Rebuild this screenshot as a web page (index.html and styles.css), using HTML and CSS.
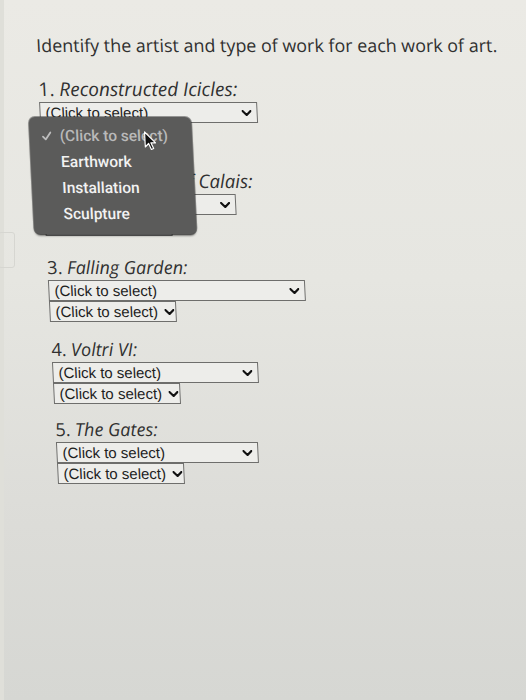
FILE: index.html
```html
<!DOCTYPE html>
<html>
<head>
<meta charset="utf-8">
<link rel="stylesheet" href="styles.css">
</head>
<body>
<div class="screen">
  <div class="edge-box"></div>
  <div class="page">
    <p class="title">Identify the artist and type of work for each work of art.</p>
    <ol class="items">
      <li class="item gap-1">
        <div class="label label-lg">1. <em>Reconstructed Icicles:</em></div>
        <div class="sel-wrap">
          <div class="sel w-218"><span>(Click to select)</span><svg class="chev" viewBox="0 0 10 6"><path d="M1 1 L5 5 L9 1"/></svg></div>
          <div class="menu">
            <div class="opt opt-current"><svg class="check" viewBox="0 0 10 10"><path d="M1.2 5.6 L3.8 8.4 L8.8 1.4"/></svg>(Click to select)</div>
            <div class="opt">Earthwork</div>
            <div class="opt">Installation</div>
            <div class="opt">Sculpture</div>
            <svg class="cursor" viewBox="0 0 12 20"><path d="M1 1 L1 16 L4.5 12.5 L7 18.5 L9.3 17.5 L6.8 11.8 L11.5 11.8 Z"/></svg>
          </div>
        </div>
        <div class="sel w-127"><span>(Click to select)</span><svg class="chev" viewBox="0 0 10 6"><path d="M1 1 L5 5 L9 1"/></svg></div>
      </li>
      <li class="item gap-2">
        <div class="label label-md">2. <em>The Burghers of Calais:</em></div>
        <div class="sel w-192"><span>(Click to select)</span><svg class="chev" viewBox="0 0 10 6"><path d="M1 1 L5 5 L9 1"/></svg></div>
        <div class="sel w-127"><span>(Click to select)</span><svg class="chev" viewBox="0 0 10 6"><path d="M1 1 L5 5 L9 1"/></svg></div>
      </li>
      <li class="item gap-3">
        <div class="label">3. <em>Falling Garden:</em></div>
        <div class="sel w-257"><span>(Click to select)</span><svg class="chev" viewBox="0 0 10 6"><path d="M1 1 L5 5 L9 1"/></svg></div>
        <div class="sel w-127"><span>(Click to select)</span><svg class="chev" viewBox="0 0 10 6"><path d="M1 1 L5 5 L9 1"/></svg></div>
      </li>
      <li class="item gap-4">
        <div class="label">4. <em>Voltri VI:</em></div>
        <div class="sel w-206"><span>(Click to select)</span><svg class="chev" viewBox="0 0 10 6"><path d="M1 1 L5 5 L9 1"/></svg></div>
        <div class="sel w-127"><span>(Click to select)</span><svg class="chev" viewBox="0 0 10 6"><path d="M1 1 L5 5 L9 1"/></svg></div>
      </li>
      <li class="item">
        <div class="label">5. <em>The Gates:</em></div>
        <div class="sel w-202"><span>(Click to select)</span><svg class="chev" viewBox="0 0 10 6"><path d="M1 1 L5 5 L9 1"/></svg></div>
        <div class="sel w-127"><span>(Click to select)</span><svg class="chev" viewBox="0 0 10 6"><path d="M1 1 L5 5 L9 1"/></svg></div>
      </li>
    </ol>
  </div>
</div>
</body>
</html>
```

FILE: styles.css
```css
html, body {
  margin: 0;
  padding: 0;
}

body {
  width: 526px;
  height: 700px;
  overflow: hidden;
  background: linear-gradient(180deg, #ebeae5 0%, #e6e6e1 40%, #dcdcd8 75%, #d6d7d3 100%);
}

.screen {
  position: relative;
  height: 700px;
  border-left: 4px solid #dfdfd9;
  box-sizing: border-box;
}

.edge-box {
  position: absolute;
  left: -6px;
  top: 232px;
  width: 15px;
  height: 34px;
  border: 1px solid #d6d6d1;
  border-radius: 3px;
}

.page {
  padding: 33px 0 0 30px;
  transform: skewX(2.84deg);
  transform-origin: 0 0;
  color: #303030;
}

.title {
  margin: 0 0 21px;
  font-family: "Open Sans", Lato, sans-serif;
  font-size: 17.9px;
  line-height: 24px;
}

.items {
  list-style: none;
  margin: 0;
  padding: 0;
}

.item {
  display: flex;
  flex-direction: column;
  align-items: flex-start;
}

.gap-1 { margin-bottom: 26px; }
.gap-2 { margin-bottom: 20px; }
.gap-3 { margin-bottom: 16px; }
.gap-4 { margin-bottom: 14px; }

.label {
  font-family: "Open Sans", Lato, sans-serif;
  font-size: 18px;
  line-height: 22px;
  margin-bottom: 2px;
}

.label-lg {
  font-size: 19px;
}

.label-md {
  font-size: 18.7px;
}

.label em {
  font-style: italic;
}

.sel-wrap {
  position: relative;
}

.sel {
  box-sizing: border-box;
  height: 21px;
  display: flex;
  align-items: center;
  justify-content: space-between;
  padding: 0 5px 0 5px;
  border: 1px solid #6e6e6c;
  background: #ededea;
  font-family: "Liberation Sans", Arial, sans-serif;
  font-size: 15px;
  color: #1e1e1e;
  white-space: nowrap;
}

.chev {
  width: 10px;
  height: 6px;
  flex: none;
  margin-left: 6px;
}

.chev path {
  fill: none;
  stroke: #111;
  stroke-width: 2.2;
  stroke-linecap: round;
  stroke-linejoin: round;
}

.w-127 { width: 127px; }
.w-192 { width: 192px; }
.w-202 { width: 202px; }
.w-206 { width: 206px; }
.w-218 { width: 218px; }
.w-257 { width: 257px; }

.menu {
  position: absolute;
  left: -11px;
  top: 15px;
  width: 162px;
  height: 117px;
  box-sizing: border-box;
  padding-top: 6px;
  background: #5b5b5a;
  border-radius: 6px;
  box-shadow: 0 2px 2px rgba(0, 0, 0, 0.45), 0 0 0 1px rgba(60, 60, 60, 0.5);
  z-index: 5;
}

.opt {
  height: 26px;
  line-height: 26px;
  padding-left: 30px;
  position: relative;
  font-family: Roboto, "Liberation Sans", sans-serif;
  font-weight: 500;
  font-size: 15.5px;
  color: #f2f2f2;
}

.opt-current {
  color: #b9b9b9;
}

.check {
  position: absolute;
  left: 12px;
  top: 8px;
  width: 10px;
  height: 10px;
}

.check path {
  fill: none;
  stroke: #bdbdbd;
  stroke-width: 1.8;
  stroke-linecap: round;
  stroke-linejoin: round;
}

.cursor {
  position: absolute;
  left: 114px;
  top: 14px;
  width: 12px;
  height: 20px;
}

.cursor path {
  fill: #111;
  stroke: #fff;
  stroke-width: 1.2;
  stroke-linejoin: round;
}
```
